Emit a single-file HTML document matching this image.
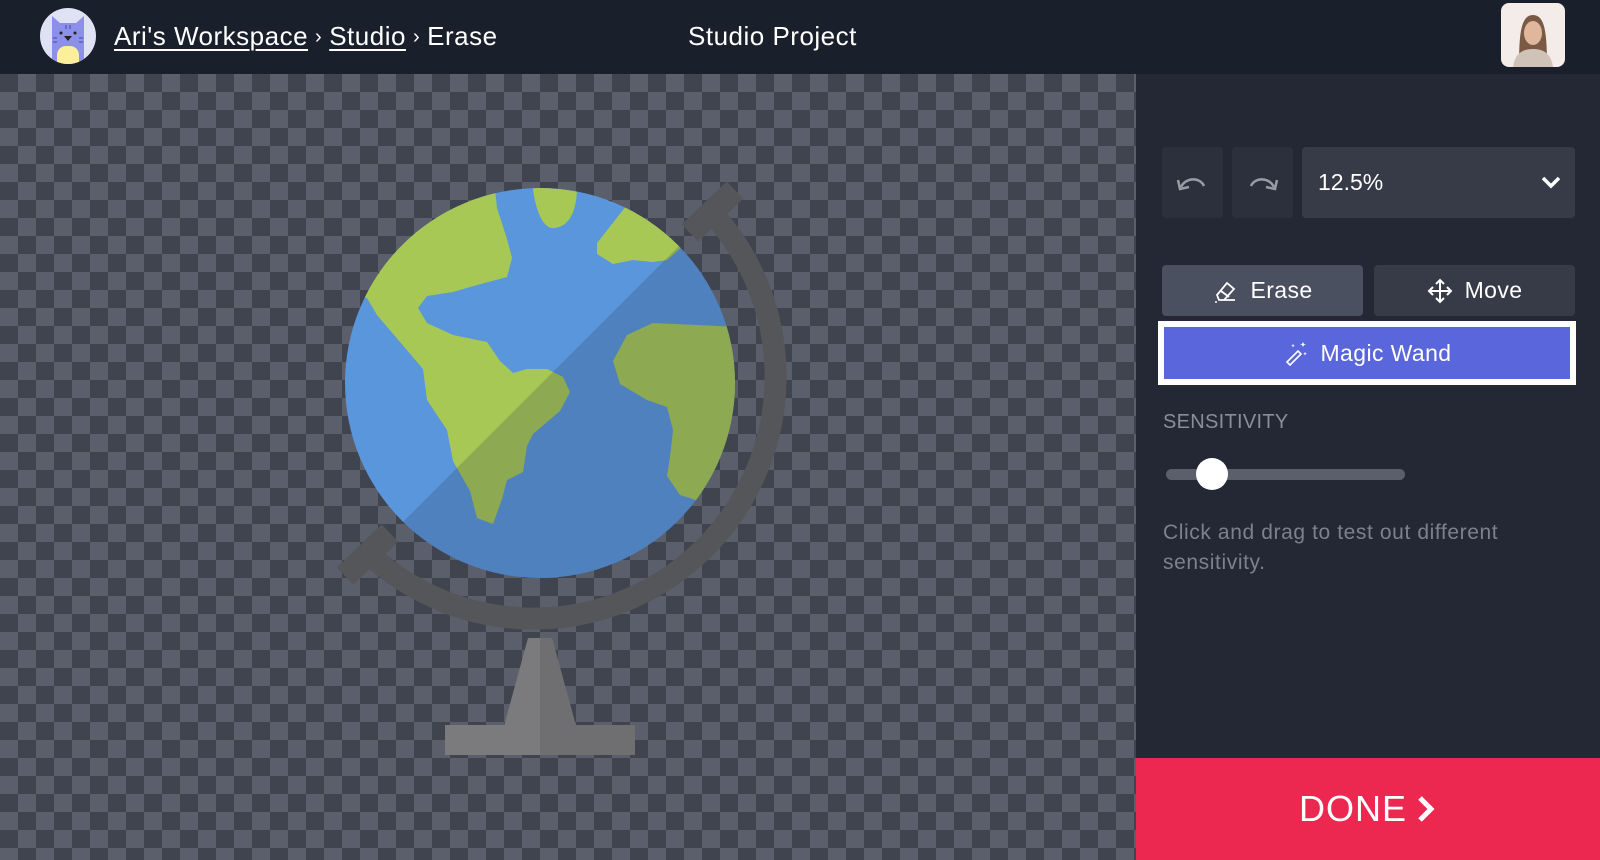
<!DOCTYPE html>
<html><head><meta charset="utf-8"><style>
*{margin:0;padding:0;box-sizing:border-box}
body{width:1600px;height:860px;overflow:hidden;background:#242835;font-family:"Liberation Sans",sans-serif;position:relative}
.hdr{position:absolute;left:0;top:0;width:1600px;height:74px;background:#1a1f2c;color:#fff}
.crumb{position:absolute;left:114px;top:18px;font-size:26px;line-height:36px;white-space:nowrap;letter-spacing:0.5px}
.crumb u{text-decoration:underline;text-decoration-thickness:2px;text-underline-offset:4px}
.crumb .sep{font-size:20px;margin:0 7px;position:relative;top:-2px}
.title{position:absolute;left:688px;top:18px;font-size:26px;line-height:36px;letter-spacing:0.5px}
.av{position:absolute;left:1501px;top:3px;width:64px;height:64px;border-radius:8px;background:#f3ece8;overflow:hidden}
.canvas{position:absolute;left:0;top:74px;width:1136px;height:786px;background-color:#40444f;
background-image:linear-gradient(45deg,#5b5f6b 25%,transparent 25%,transparent 75%,#5b5f6b 75%),linear-gradient(45deg,#5b5f6b 25%,transparent 25%,transparent 75%,#5b5f6b 75%);
background-size:36px 36px;background-position:0 0,18px 18px}
.btn{position:absolute;border-radius:4px}
.lbl{color:#fff;font-size:23px;display:flex;align-items:center;justify-content:center;gap:12px;letter-spacing:0.4px}
.done{position:absolute;left:1136px;top:758px;width:464px;height:102px;background:#ec2750;color:#fff;font-size:36px;display:flex;align-items:center;justify-content:center;gap:8px;letter-spacing:1px}
</style></head><body>
<div class="hdr">
<svg style="position:absolute;left:40px;top:8px" width="56" height="56" viewBox="0 0 56 56">
<defs><clipPath id="cc"><circle cx="28" cy="28" r="28"/></clipPath></defs>
<circle cx="28" cy="28" r="28" fill="#dfe1f5"/>
<g clip-path="url(#cc)">
<path d="M12 22 L12 8 L20 15 L36 15 L44 8 L44 22 L44 60 L12 60 Z" fill="#8d90e8"/>
<rect x="17" y="38" width="22" height="24" rx="9" fill="#fbef9a"/>
<path d="M24 28 L32 28 L28 33 Z" fill="#222"/>
<circle cx="21" cy="25" r="1.5" fill="#222"/><circle cx="35" cy="25" r="1.5" fill="#222"/>
<path d="M13 30h4M13 34h4M39 30h4M39 34h4M26 17v4M30 17v4" stroke="#5a5ec0" stroke-width="1.5"/>
</g></svg>
<div class="crumb"><u>Ari's Workspace</u><span class="sep">›</span><u>Studio</u><span class="sep">›</span>Erase</div>
<div class="title">Studio Project</div>
<div class="av"><svg width="64" height="64" viewBox="0 0 64 64">
<path d="M18 64 C18 30 20 12 32 12 C44 12 46 30 46 64Z" fill="#7a5a44"/>
<ellipse cx="32" cy="30" rx="9" ry="12" fill="#e0b79c"/>
<path d="M12 64 C14 50 22 46 32 46 C42 46 50 50 52 64Z" fill="#cfc3b8"/></svg></div>
</div>

<div class="canvas"></div>
<svg style="position:absolute;left:0;top:0" width="1136" height="860" viewBox="0 0 1136 860">
<defs><clipPath id="g"><circle cx="540" cy="383" r="195"/></clipPath></defs>
<path d="M711 212 A242 242 0 0 1 369 554" fill="none" stroke="#555659" stroke-width="22"/>
<line x1="690" y1="233" x2="735" y2="190" stroke="#555659" stroke-width="24"/>
<line x1="345" y1="576" x2="390" y2="533" stroke="#555659" stroke-width="24"/>
<path d="M528 638 L552 638 L576 726 L504 726 Z" fill="#7b7b7e"/>
<path d="M540 638 L552 638 L576 726 L540 726 Z" fill="#6f6f72"/>
<rect x="445" y="725" width="190" height="30" fill="#7b7b7e"/>
<rect x="540" y="725" width="95" height="30" fill="#6f6f72"/>
<circle cx="540" cy="383" r="195" fill="#5a96dc"/>
<g clip-path="url(#g)" fill="#a8c855">
<path d="M493 170 L330 170 L330 290 L367 298 L377 315 L400 342 L423 369 L427 400 L447 430 L453 461 L470 491 L477 518 L493 524 L502 499 L507 480 L523 472 L527 446 L533 434 L560 411 L570 392 L563 377 L547 369 L527 369 L513 373 L500 361 L487 342 L453 335 L427 323 L418 308 L427 296 L453 292 L477 285 L507 277 L512 258 L507 239 L497 208 Z"/>
<path d="M532 180 C535 215 545 230 555 228 C570 226 578 210 577 180 Z"/>
<path d="M627 205 L597 243 L597 254 L613 264 L633 260 L653 262 L667 260 L690 240 L660 200 Z"/>
<path d="M740 327 L653 323 L627 335 L613 361 L620 384 L647 400 L667 407 L673 430 L670 457 L667 476 L680 495 L693 499 L740 520 Z"/>
<path d="M690 170 L760 170 L760 600 L330 600 L405 520 L678 247 Z" fill="rgba(35,45,70,0.2)"/>
</g>
</svg>

<div class="btn" style="left:1162px;top:147px;width:61px;height:71px;background:#2c303c"><svg width="61" height="71" viewBox="0 0 61 71"><path d="M19 40 C24 30 38 30 42 39" fill="none" stroke="#9a9ca3" stroke-width="2.5"/><path d="M16 33 L18 42 L27 40" fill="none" stroke="#9a9ca3" stroke-width="2.5"/></svg></div>
<div class="btn" style="left:1232px;top:147px;width:61px;height:71px;background:#2c303c"><svg width="61" height="71" viewBox="0 0 61 71"><path d="M42 40 C37 30 23 30 19 39" fill="none" stroke="#9a9ca3" stroke-width="2.5"/><path d="M45 33 L43 42 L34 40" fill="none" stroke="#9a9ca3" stroke-width="2.5"/></svg></div>
<div class="btn" style="left:1302px;top:147px;width:273px;height:71px;background:#373b47;color:#fff;font-size:23px;line-height:71px;padding-left:16px">12.5%
<svg style="position:absolute;right:12px;top:26px" width="24" height="18" viewBox="0 0 24 18"><path d="M4 5 L12 13 L20 5" fill="none" stroke="#fff" stroke-width="3.5"/></svg></div>

<div class="btn lbl" style="left:1162px;top:265px;width:201px;height:51px;background:#4a5060"><svg width="26" height="26" viewBox="0 0 26 26"><path d="M5 17 L15 5 L22 11 L12 22 L7 22 Z M9 13 L17 19 M12 22 L23 22" fill="none" stroke="#fff" stroke-width="1.8"/><path d="M3 24h2" stroke="#fff" stroke-width="1.5"/></svg>Erase</div>
<div class="btn lbl" style="left:1374px;top:265px;width:201px;height:51px;background:#373b47"><svg width="26" height="26" viewBox="0 0 26 26"><path d="M13 2v22M2 13h22M9 6l4-4 4 4M9 20l4 4 4-4M6 9l-4 4 4 4M20 9l4 4-4 4" fill="none" stroke="#fff" stroke-width="2"/></svg>Move</div>
<div style="position:absolute;left:1158px;top:321px;width:418px;height:64px;background:#fff;padding:6px"><div class="lbl" style="width:100%;height:100%;background:#5a67dc"><svg width="26" height="26" viewBox="0 0 26 26"><path d="M4 22 L15 11 L18 14 L7 25 Z" fill="none" stroke="#fff" stroke-width="1.6"/><path d="M20 2l1 2 2 .5-2 .5-1 2-1-2-2-.5 2-.5zM10 4l.7 1.4 1.4.3-1.4.3L10 7.5 9.3 6 8 5.7l1.3-.3zM22 12l.7 1.4 1.4.3-1.4.3L22 15.5l-.7-1.5-1.3-.3 1.3-.3z" fill="#fff"/></svg>Magic Wand</div></div>

<div style="position:absolute;left:1163px;top:411px;font-size:20px;color:#8a8e99;letter-spacing:0.3px">SENSITIVITY</div>
<div style="position:absolute;left:1166px;top:469px;width:239px;height:11px;border-radius:6px;background:#5b5f6b"></div>
<div style="position:absolute;left:1196px;top:458px;width:32px;height:32px;border-radius:50%;background:#fff"></div>
<div style="position:absolute;left:1163px;top:518px;width:380px;font-size:21px;line-height:30px;color:#7d818d;letter-spacing:0.6px">Click and drag to test out different sensitivity.</div>

<div class="done">DONE<svg width="22" height="30" viewBox="0 0 22 30"><path d="M5 4 L16 15 L5 26" fill="none" stroke="#fff" stroke-width="5"/></svg></div>
</body></html>
